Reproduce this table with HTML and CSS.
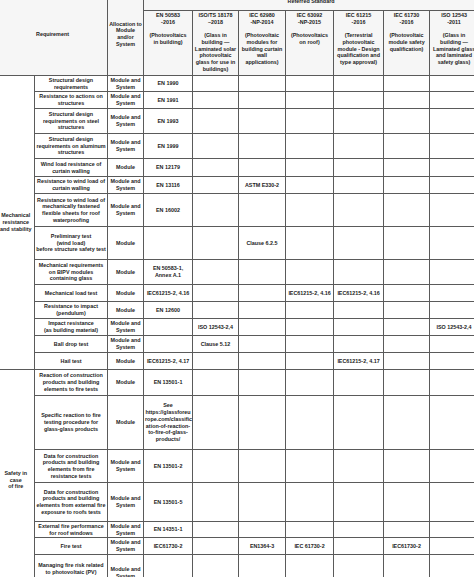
FILE: index.html
```html
<!DOCTYPE html>
<html lang="en">
<head>
<meta charset="utf-8">
<title>Referred standards</title>
<link rel="stylesheet" href="styles.css">
</head>
<body>
<table class="grid">
  <colgroup>
    <col class="c-cat"><col class="c-req"><col class="c-alloc">
    <col class="c-en"><col class="c-iso"><col class="c-62980"><col class="c-63092">
    <col class="c-61215"><col class="c-61730"><col class="c-12543">
  </colgroup>
  <thead>
    <tr class="h18">
      <th colspan="2" rowspan="2" class="hd">Requirement</th>
      <th rowspan="2" class="hd">Allocation to<br>Module<br>and/or<br>System</th>
      <th colspan="7" class="ref">Referred Standard</th>
    </tr>
    <tr class="h65">
      <th class="std">EN 50583<br>-2016<br><br>(Photovoltaics<br>in building)</th>
      <th class="std">ISO/TS 18178<br>–2018<br><br>(Glass in<br>building —<br>Laminated solar<br>photovoltaic<br>glass for use in<br>buildings)</th>
      <th class="std">IEC 62980<br>-NP-2014<br><br>(Photovoltaic<br>modules for<br>building curtain<br>wall<br>applications)</th>
      <th class="std">IEC 63092<br>-NP-2015<br><br>(Photovoltaics<br>on roof)</th>
      <th class="std">IEC 61215<br>-2016<br><br>(Terrestrial<br>photovoltaic<br>module - Design<br>qualification and<br>type approval)</th>
      <th class="std">IEC 61730<br>-2016<br><br>(Photovoltaic<br>module safety<br>qualification)</th>
      <th class="std">ISO 12543<br>-2011<br><br>(Glass in<br>building —<br>Laminated glass<br>and laminated<br>safety glass)</th>
    </tr>
  </thead>
  <tbody>
    <tr class="h16">
      <td rowspan="14" class="cat">Mechanical<br>resistance<br>and stability</td>
      <td>Structural design<br>requirements</td><td>Module and<br>System</td><td>EN 1990</td>
      <td></td><td></td><td></td><td></td><td></td><td></td>
    </tr>
    <tr class="h17">
      <td>Resistance to actions on<br>structures</td><td>Module and<br>System</td><td>EN 1991</td>
      <td></td><td></td><td></td><td></td><td></td><td></td>
    </tr>
    <tr class="h25">
      <td>Structural design<br>requirements on steel<br>structures</td><td>Module and<br>System</td><td>EN 1993</td>
      <td></td><td></td><td></td><td></td><td></td><td></td>
    </tr>
    <tr class="h25">
      <td>Structural design<br>requirements on aluminum<br>structures</td><td>Module and<br>System</td><td>EN 1999</td>
      <td></td><td></td><td></td><td></td><td></td><td></td>
    </tr>
    <tr class="h18">
      <td>Wind load resistance of<br>curtain walling</td><td>Module</td><td>EN 12179</td>
      <td></td><td></td><td></td><td></td><td></td><td></td>
    </tr>
    <tr class="h17">
      <td>Resistance to wind load of<br>curtain walling</td><td>Module and<br>System</td><td>EN 13116</td>
      <td></td><td>ASTM E330-2</td><td></td><td></td><td></td><td></td>
    </tr>
    <tr class="h33">
      <td>Resistance to wind load of<br>mechanically fastened<br>flexible sheets for roof<br>waterproofing</td><td>Module and<br>System</td><td>EN 16002</td>
      <td></td><td></td><td></td><td></td><td></td><td></td>
    </tr>
    <tr class="h33">
      <td>Preliminary test<br>(wind load)<br>before structure safety test</td><td>Module</td><td></td>
      <td></td><td>Clause 6.2.5</td><td></td><td></td><td></td><td></td>
    </tr>
    <tr class="h25">
      <td>Mechanical requirements<br>on BIPV modules<br>containing glass</td><td>Module</td><td>EN 50583-1,<br>Annex A.1</td>
      <td></td><td></td><td></td><td></td><td></td><td></td>
    </tr>
    <tr class="h17">
      <td>Mechanical load test</td><td>Module</td><td>IEC61215-2, 4.16</td>
      <td></td><td></td><td>IEC61215-2, 4.16</td><td>IEC61215-2, 4.16</td><td></td><td></td>
    </tr>
    <tr class="h17">
      <td>Resistance to impact<br>(pendulum)</td><td>Module</td><td>EN 12600</td>
      <td></td><td></td><td></td><td></td><td></td><td></td>
    </tr>
    <tr class="h17">
      <td>Impact resistance<br>(as building material)</td><td>Module and<br>System</td><td></td>
      <td>ISO 12543-2,4</td><td></td><td></td><td></td><td></td><td>ISO 12543-2,4</td>
    </tr>
    <tr class="h17">
      <td>Ball drop test</td><td>Module and<br>System</td><td></td>
      <td>Clause 5.12</td><td></td><td></td><td></td><td></td><td></td>
    </tr>
    <tr class="h17">
      <td>Hail test</td><td>Module</td><td>IEC61215-2, 4.17</td>
      <td></td><td></td><td></td><td>IEC61215-2, 4.17</td><td></td><td></td>
    </tr>
    <tr class="h26 sect">
      <td rowspan="7" class="cat">Safety in<br>case<br>of fire</td>
      <td>Reaction of construction<br>products and building<br>elements to fire tests</td><td>Module</td><td>EN 13501-1</td>
      <td></td><td></td><td></td><td></td><td></td><td></td>
    </tr>
    <tr class="h54">
      <td>Specific reaction to fire<br>testing procedure for<br>glass-glass products</td><td>Module</td><td>See<br>https://glassforeu<br>rope.com/classific<br>ation-of-reaction-<br>to-fire-of-glass-<br>products/</td>
      <td></td><td></td><td></td><td></td><td></td><td></td>
    </tr>
    <tr class="h33">
      <td>Data for construction<br>products and building<br>elements from fire<br>resistance tests</td><td>Module and<br>System</td><td>EN 13501-2</td>
      <td></td><td></td><td></td><td></td><td></td><td></td>
    </tr>
    <tr class="h39">
      <td>Data for construction<br>products and building<br>elements from external fire<br>exposure to roofs tests</td><td>Module and<br>System</td><td>EN 13501-5</td>
      <td></td><td></td><td></td><td></td><td></td><td></td>
    </tr>
    <tr class="h16">
      <td>External fire performance<br>for roof windows</td><td>Module and<br>System</td><td>EN 14351-1</td>
      <td></td><td></td><td></td><td></td><td></td><td></td>
    </tr>
    <tr class="h17">
      <td>Fire test</td><td>Module and<br>System</td><td>IEC61730-2</td>
      <td></td><td>EN1364-3</td><td>IEC 61730-2</td><td></td><td>IEC61730-2</td><td></td>
    </tr>
    <tr class="h36">
      <td>Managing fire risk related<br>to photovoltaic (PV)<br>systems on buildings</td><td>Module and<br>System</td><td></td>
      <td></td><td></td><td></td><td></td><td></td><td></td>
    </tr>
  </tbody>
</table>
</body>
</html>
```

FILE: styles.css
```css
html, body {
  margin: 0;
  padding: 0;
  background: #ffffff;
  overflow: hidden;
}

.grid {
  border-collapse: collapse;
  table-layout: fixed;
  width: 481px;
  margin: -8px 0 0 -3px;
  font-family: "Liberation Sans", Arial, sans-serif;
  font-weight: bold;
  font-size: 5.4px;
  line-height: 6.7px;
  color: #1c1c1c;
}

.c-cat { width: 37px; }
.c-req { width: 73px; }
.c-alloc { width: 36px; }
.c-en { width: 49px; }
.c-iso { width: 46px; }
.c-62980 { width: 47px; }
.c-63092 { width: 48px; }
.c-61215 { width: 50px; }
.c-61730 { width: 46px; }
.c-12543 { width: 49px; }

.grid th,
.grid td {
  border: 1px solid #5a5a5a;
  padding: 0 1px;
  text-align: center;
  vertical-align: middle;
  white-space: nowrap;
  font-weight: bold;
  overflow: visible;
}

.grid thead th {
  background: #f6f6f6;
}

.grid th.std {
  vertical-align: top;
  padding-top: 1px;
}

.grid td.cat {
  border-left: none;
}

.h16 { height: 16px; }
.h17 { height: 17px; }
.h18 { height: 18px; }
.h25 { height: 25px; }
.h26 { height: 26px; }
.h33 { height: 33px; }
.h36 { height: 36px; }
.h39 { height: 39px; }
.h54 { height: 54px; }
.h65 { height: 65px; }
```
